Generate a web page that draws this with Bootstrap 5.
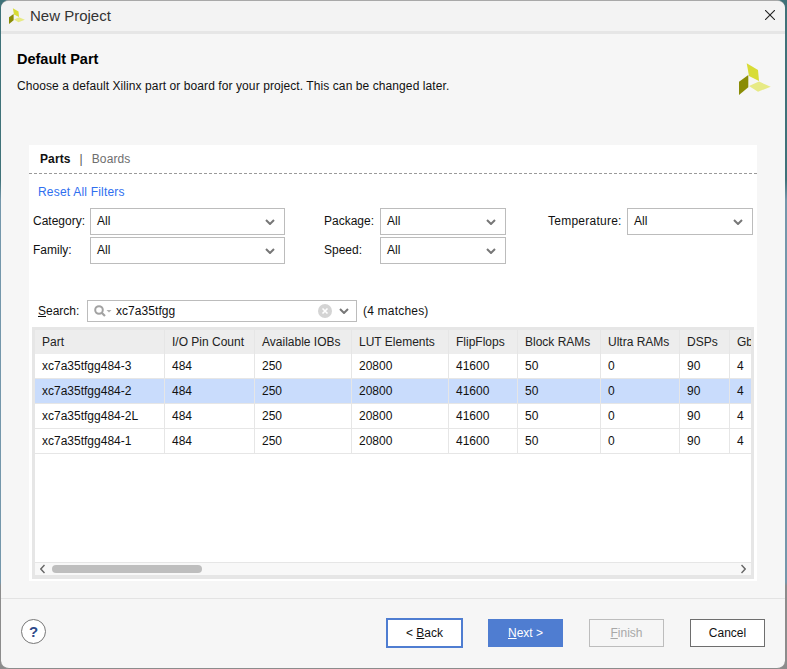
<!DOCTYPE html>
<html lang="en">
<head>
<meta charset="utf-8">
<title>New Project</title>
<link href="https://cdn.jsdelivr.net/npm/bootstrap@5.3.0/dist/css/bootstrap.min.css" rel="stylesheet">
<style>
html,body{margin:0;height:669px;overflow:hidden;}
body{font-family:"Liberation Sans",Arial,sans-serif;font-size:12px;color:#111;background:linear-gradient(to bottom,#3f7279 0,#3f7279 180px,#7497ab 200px,#7497ab 582px,#8c8c8c 586px,#8c8c8c 669px);}
.dlg{width:784px;height:667px;margin-left:1px;background:#f6f6f6;border-radius:8px;border-top:1px solid #a8a8a8;border-bottom:1px solid #8c8c8c;overflow:hidden;box-sizing:content-box;}
.ttl{height:30px;background:#f3f3f3;border-bottom:3px solid #e6e6e6;padding-left:8px;box-sizing:content-box;}
.ttl-text{font-size:15px;margin-left:5px;color:#333;}
.ttl-x{margin-right:10px;margin-top:-2px;}
.hdr{height:111px;padding:18px 14px 0 16px;}
.hdr-logo{margin-top:11px;}
.hdr-title{font-size:14.5px;font-weight:700;color:#000;line-height:15px;margin:0;}
.hdr-sub{line-height:14px;margin:12px 0 0;color:#111;letter-spacing:.085px;}
.pnl{width:728px;height:436px;margin-left:28px;background:#fff;}
.tabs{height:29px;border-bottom:1px dashed #9a9a9a;padding:7px 0 0 11px;line-height:15px;letter-spacing:.1px;}
.tab-on{font-weight:700;color:#111;}
.tab-sep{margin:0 9px;color:#555;}
.tab-off{color:#6e6e6e;}
.rst{color:#2f6fef;display:block;line-height:14px;padding:11px 0 0 9px;height:34px;text-decoration:none;letter-spacing:.2px;}
.flt-row{height:27px;margin-bottom:2px;}
.lbl{line-height:26px;}
.l1{width:61px;padding-left:4px;}
.l2{width:56px;margin-left:39px;}
.l3{width:79px;margin-left:42px;letter-spacing:.25px;}
.sel{height:27px;border:1px solid #bcbcbc;background:#fff;padding:0 9px 0 6px;display:flex;justify-content:space-between;align-items:center;}
.sel span{margin-top:-2px;}
.sel svg{margin-top:1px;}
.s1{width:195px;}
.s2{width:126px;}
.s3{width:126px;}
.srch-row{height:22px;margin-top:36px;}
.srch-lbl{margin-left:9px;width:49px;}
.srch{width:270px;height:22px;border:1px solid #bcbcbc;padding:0 7px 0 6px;}
.srch-q{margin-left:4px;flex-grow:1;letter-spacing:.05px;}
.srch-chev{margin-left:7px;}
.match{margin-left:6px;letter-spacing:.2px;}
.tbl-wrap{width:722px;height:252px;margin:5px 0 0 3px;background:#e6e6e6;padding:3px 3px 4px 3px;}
.tbl-in{width:716px;height:233px;background:#fff;overflow:hidden;border-bottom:1px solid #e6e6e6;}
.grid{display:grid;grid-template-columns:130px 90px 97px 97px 69px 83px 79px 50px 30px;}
.grid>div{height:25px;line-height:25px;padding-left:7px;border-right:1px solid #e6e6e6;border-bottom:1px solid #e6e6e6;white-space:nowrap;overflow:hidden;}
.grid>.th{height:24px;background:#ededed;line-height:25px;border-bottom:0;color:#222;}
.grid>.act{background:#c9dcfc;}
.scr{width:716px;height:12px;background:#f8f8f8;padding:0 5px;}
.thumb{width:150px;height:8px;border-radius:4px;background:#bebebe;margin-left:7px;}
.foot{height:69px;margin-top:17px;border-top:1px solid #e3e3e3;padding:20px 20px 0 20px;}
.help{width:25px;height:25px;border-radius:50%;border:1px solid #777;background:#fff;color:#2d4a8a;font-weight:700;font-size:15px;line-height:23px;text-align:center;}
.vbtn{height:28px;width:75px;border-radius:0;font-size:12px;line-height:26px;padding:0;text-align:center;border:1px solid #6e6e6e;background:#fff;color:#111;}
.b-back{height:30px;width:77px;border:2px solid #4f7dd1;margin-top:-1px;}
.b-next{background:#4f7dd1;border-color:#4f7dd1;color:#fff;margin-left:25px;}
.b-fin{background:#f6f6f6;border-color:#bdbdbd;color:#a8a8a8;margin-left:26px;}
.b-can{margin-left:26px;}
</style>
</head>
<body>
<div class="dlg">
  <div class="ttl d-flex align-items-center">
    <svg width="16" height="16" viewBox="0 0 32 32"><polygon points="7.7,.3 19,7 20,18 10,13" fill="#d8dc35"/><polygon points="10,23 20,18.6 31.7,23.7 19,28.7" fill="#e7ea85"/><polygon points="0,18.7 9.3,12 9.3,24.3 0,32" fill="#8a8c06"/></svg>
    <span class="ttl-text">New Project</span>
    <svg class="ms-auto ttl-x" width="10" height="10" viewBox="0 0 10 10"><path d="M0 0 10 10M10 0 0 10" stroke="#222" stroke-width="1.1"/></svg>
  </div>
  <div class="hdr d-flex justify-content-between">
    <div>
      <p class="hdr-title">Default Part</p>
      <p class="hdr-sub">Choose a default Xilinx part or board for your project. This can be changed later.</p>
    </div>
    <svg class="hdr-logo" width="32" height="32" viewBox="0 0 32 32"><polygon points="7.7,.3 19,7 20,18 10,13" fill="#d8dc35"/><polygon points="10,23 20,18.6 31.7,23.7 19,28.7" fill="#e7ea85"/><polygon points="0,18.7 9.3,12 9.3,24.3 0,32" fill="#8a8c06"/></svg>
  </div>
  <div class="pnl">
    <div class="tabs"><span class="tab-on">Parts</span><span class="tab-sep">|</span><span class="tab-off">Boards</span></div>
    <a class="rst" href="#">Reset All Filters</a>
    <div class="flt-row d-flex">
      <div class="lbl l1">Category:</div><div class="sel s1"><span>All</span><svg width="10" height="6" viewBox="0 0 10 6"><path d="M1 1 5 5 9 1" fill="none" stroke="#777" stroke-width="2"/></svg></div>
      <div class="lbl l2">Package:</div><div class="sel s2"><span>All</span><svg width="10" height="6" viewBox="0 0 10 6"><path d="M1 1 5 5 9 1" fill="none" stroke="#777" stroke-width="2"/></svg></div>
      <div class="lbl l3">Temperature:</div><div class="sel s3"><span>All</span><svg width="10" height="6" viewBox="0 0 10 6"><path d="M1 1 5 5 9 1" fill="none" stroke="#777" stroke-width="2"/></svg></div>
    </div>
    <div class="flt-row d-flex">
      <div class="lbl l1">Family:</div><div class="sel s1"><span>All</span><svg width="10" height="6" viewBox="0 0 10 6"><path d="M1 1 5 5 9 1" fill="none" stroke="#777" stroke-width="2"/></svg></div>
      <div class="lbl l2">Speed:</div><div class="sel s2"><span>All</span><svg width="10" height="6" viewBox="0 0 10 6"><path d="M1 1 5 5 9 1" fill="none" stroke="#777" stroke-width="2"/></svg></div>
    </div>
    <div class="srch-row d-flex align-items-center">
      <div class="srch-lbl"><u>S</u>earch:</div>
      <div class="srch d-flex align-items-center">
        <svg width="18" height="12" viewBox="0 0 18 12"><circle cx="5" cy="5" r="3.8" fill="none" stroke="#a2a2a2" stroke-width="2"/><path d="M7.5 7.5 11 11" stroke="#a2a2a2" stroke-width="2.2"/><path d="M12.5 5h5l-2.5 2.5z" fill="#b0b0b0"/></svg>
        <span class="srch-q">xc7a35tfgg</span>
        <svg width="14" height="14" viewBox="0 0 14 14"><circle cx="7" cy="7" r="7" fill="#d4d4d4"/><path d="M4.5 4.5 9.5 9.5M9.5 4.5 4.5 9.5" stroke="#fff" stroke-width="1.6"/></svg>
        <svg class="srch-chev" width="10" height="6" viewBox="0 0 10 6"><path d="M1 1 5 5 9 1" fill="none" stroke="#777" stroke-width="2"/></svg>
      </div>
      <div class="match">(4 matches)</div>
    </div>
    <div class="tbl-wrap">
      <div class="tbl-in">
        <div class="grid">
          <div class="th">Part</div><div class="th">I/O Pin Count</div><div class="th">Available IOBs</div><div class="th">LUT Elements</div><div class="th">FlipFlops</div><div class="th">Block RAMs</div><div class="th">Ultra RAMs</div><div class="th">DSPs</div><div class="th">Gb</div>
          <div>xc7a35tfgg484-3</div><div>484</div><div>250</div><div>20800</div><div>41600</div><div>50</div><div>0</div><div>90</div><div>4</div>
          <div class="act">xc7a35tfgg484-2</div><div class="act">484</div><div class="act">250</div><div class="act">20800</div><div class="act">41600</div><div class="act">50</div><div class="act">0</div><div class="act">90</div><div class="act">4</div>
          <div>xc7a35tfgg484-2L</div><div>484</div><div>250</div><div>20800</div><div>41600</div><div>50</div><div>0</div><div>90</div><div>4</div>
          <div>xc7a35tfgg484-1</div><div>484</div><div>250</div><div>20800</div><div>41600</div><div>50</div><div>0</div><div>90</div><div>4</div>
        </div>
      </div>
      <div class="scr d-flex align-items-center">
        <svg width="5" height="10" viewBox="0 0 5 10"><path d="M4.5 1 .8 5 4.5 9" fill="none" stroke="#666" stroke-width="1.4"/></svg>
        <div class="thumb"></div>
        <svg class="ms-auto" width="5" height="10" viewBox="0 0 5 10"><path d="M.5 1 4.2 5 .5 9" fill="none" stroke="#666" stroke-width="1.4"/></svg>
      </div>
    </div>
  </div>
  <div class="foot d-flex align-items-start">
    <div class="help">?</div>
    <div class="ms-auto d-flex">
      <button class="btn vbtn b-back">&lt; <u>B</u>ack</button>
      <button class="btn vbtn b-next"><u>N</u>ext &gt;</button>
      <button class="btn vbtn b-fin"><u>F</u>inish</button>
      <button class="btn vbtn b-can">Cancel</button>
    </div>
  </div>
</div>
</body>
</html>
